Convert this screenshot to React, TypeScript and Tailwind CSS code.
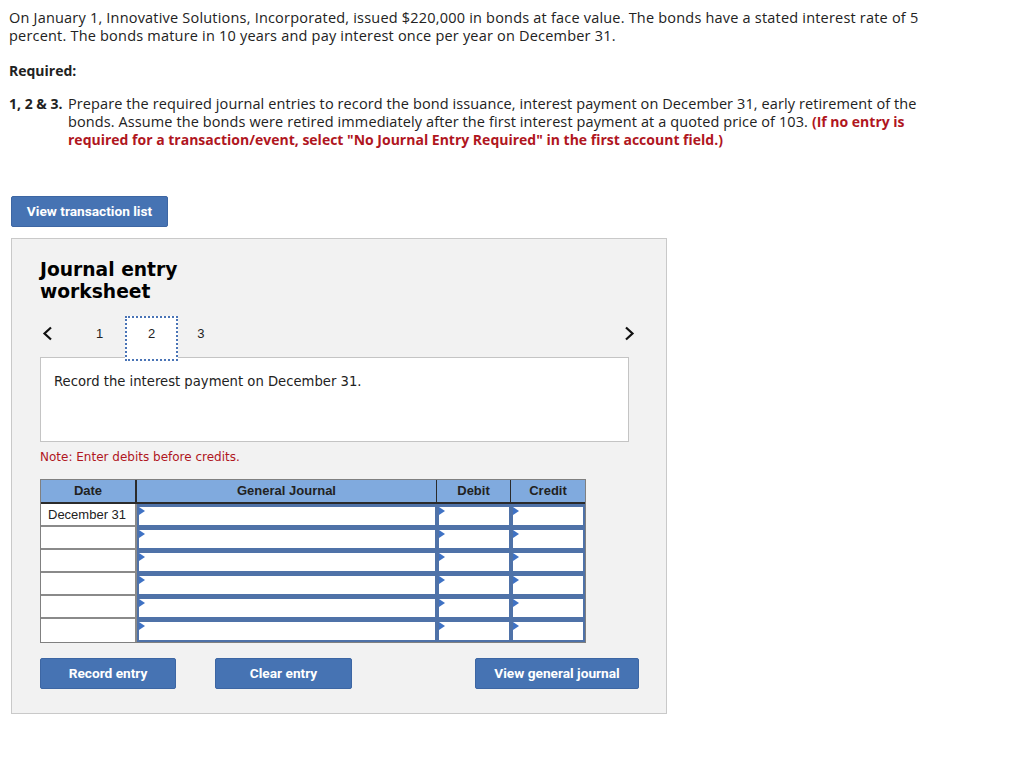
import React from 'react';

const BTN = 'shrink-0 h-[31px] rounded-[2px] bg-[#4673b3] text-white text-[13.7px] font-bold [font-family:Roboto,sans-serif] border border-[#3d66a3]';
const BOLD = 'font-bold text-[14px] tracking-normal';

const Flag: React.FC = () => (
  <span className="absolute left-0 top-0 h-0 w-0 border-y-[4px] border-l-[6px] border-y-transparent border-l-[#3f72c4]" />
);

const InputCell: React.FC<{ w: string }> = ({ w }) => (
  <div className={`relative ${w} h-full bg-white border-2 border-t-[3px] border-[#4f72a8]`}>
    <Flag />
  </div>
);

const Chevron: React.FC<{ dir: 'left' | 'right'; className?: string }> = ({ dir, className }) => (
  <svg width="11" height="15" viewBox="0 0 11 15" className={className}>
    <path
      d={dir === 'left' ? 'M9 1.5 L2.5 7.5 L9 13.5' : 'M2 1.5 L8.5 7.5 L2 13.5'}
      fill="none"
      stroke="#111"
      strokeWidth="2.2"
    />
  </svg>
);

const rows = ['December 31', '', '', '', '', ''];

export default function App() {
  return (
    <div className="min-h-[759px] w-[1024px] bg-white text-[#222] [font-family:'Open_Sans',Arial,sans-serif]">
      <div className="px-[9px] pt-[9px] text-[14.5px] leading-[18px] tracking-[0.2px]">
        <p className="whitespace-nowrap">
          On January 1, Innovative Solutions, Incorporated, issued $220,000 in bonds at face value. The bonds have a stated interest rate of 5
          <br />
          percent. The bonds mature in 10 years and pay interest once per year on December 31.
        </p>
        <p className={`mt-[17px] ${BOLD}`}>Required:</p>
        <div className="mt-[15px] flex">
          <span className={`w-[59px] shrink-0 ${BOLD} tracking-[-0.3px]`}>1, 2 &amp; 3.</span>
          <p className="whitespace-nowrap tracking-[0.1px]">
            Prepare the required journal entries to record the bond issuance, interest payment on December 31, early retirement of the
            <br />
            bonds. Assume the bonds were retired immediately after the first interest payment at a quoted price of 103.{' '}
            <span className={`${BOLD} text-[#b0161e]`}>(If no entry is</span>
            <br />
            <span className={`${BOLD} text-[#b0161e]`}>required for a transaction/event, select "No Journal Entry Required" in the first account field.)</span>
          </p>
        </div>
      </div>

      <div className="px-[11px] pt-[47px]">
        <button className={`${BTN} w-[157px]`}>View transaction list</button>

        <div className="mt-[11px] w-[656px] border border-[#c9c9c9] bg-[#f2f2f2] pl-[28px] pr-[20px] pt-[20px] pb-[24px]">
          <h2 className="text-[18.7px] font-bold leading-[22px] text-black [font-family:'DejaVu_Sans',Verdana,sans-serif]">
            Journal entry
            <br />
            worksheet
          </h2>

          <div className="mt-[13px] flex h-[41px] w-[589px] items-start text-[13px] leading-[16px] [font-family:'Liberation_Sans',Arial,sans-serif]">
            <Chevron dir="left" className="ml-[2px] mt-[10px] shrink-0" />
            <span className="ml-[43px] mt-[10px]">1</span>
            <div className="relative z-10 ml-[22px] h-[45px] w-[53px] shrink-0 border-2 border-dotted border-[#4a74b6] bg-white pt-[8px] text-center">
              2
            </div>
            <span className="ml-[19px] mt-[10px]">3</span>
            <Chevron dir="right" className="ml-auto mr-[-6px] mt-[10px] shrink-0" />
          </div>

          <div className="h-[85px] w-[589px] border border-[#c4c4c4] bg-white px-[13px] pt-[14px] text-[13.2px] [font-family:'DejaVu_Sans',Verdana,sans-serif]">
            Record the interest payment on December 31.
          </div>

          <p className="mt-[7px] text-[12px] leading-[16px] text-[#b0161e] [font-family:'DejaVu_Sans',Verdana,sans-serif]">
            Note: Enter debits before credits.
          </p>

          <div className="mt-[14px] w-[546px] border border-[#808080] [font-family:'Liberation_Sans',Arial,sans-serif] text-[13px]">
            <div className="flex h-[24px] border-b-2 border-[#2b2b2b] bg-[#80aade] font-bold text-[#222]">
              <div className="flex w-[96px] items-center justify-center border-r-2 border-[#2b2b2b]">Date</div>
              <div className="flex w-[300px] items-center justify-center border-r border-[#2b2b2b]">General Journal</div>
              <div className="flex w-[74px] items-center justify-center border-r border-[#2b2b2b]">Debit</div>
              <div className="flex w-[74px] items-center justify-center">Credit</div>
            </div>
            {rows.map((d, i) => (
              <div key={i} className="flex h-[23px]">
                <div className={`flex w-[96px] items-center border-r-2 border-[#8a8a8a] bg-white px-[7px] ${i < rows.length - 1 ? 'border-b-2' : ''}`}>
                  {d}
                </div>
                <InputCell w="w-[300px]" />
                <InputCell w="w-[74px]" />
                <InputCell w="w-[74px]" />
              </div>
            ))}
          </div>

          <div className="mt-[15px] flex">
            <button className={`${BTN} w-[136px]`}>Record entry</button>
            <button className={`${BTN} ml-[39px] w-[137px]`}>Clear entry</button>
            <button className={`${BTN} ml-[123px] w-[164px]`}>View general journal</button>
          </div>
        </div>
      </div>
    </div>
  );
}
